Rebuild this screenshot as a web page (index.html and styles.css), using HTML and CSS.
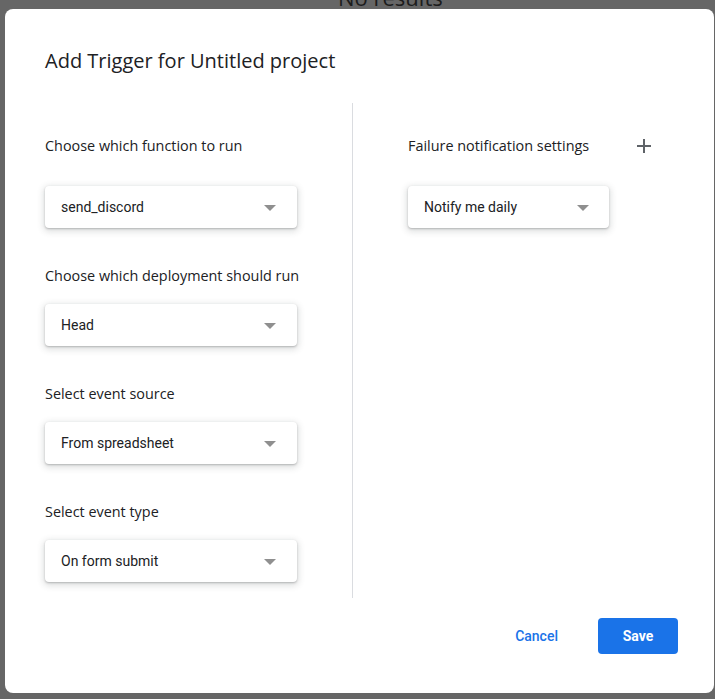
FILE: index.html
```html
<!DOCTYPE html>
<html lang="en">
<head>
<meta charset="utf-8">
<title>Add Trigger</title>
<link rel="stylesheet" href="styles.css">
</head>
<body>
<div class="behind"><span>No results</span></div>
<div class="dialog" role="dialog">
  <h1 class="title">Add Trigger for Untitled project</h1>
  <div class="columns">
    <div class="col col-left">
      <div class="label label-first">Choose which function to run</div>
      <div class="select"><span>send_discord</span><i class="arrow"></i></div>
      <div class="label">Choose which deployment should run</div>
      <div class="select"><span>Head</span><i class="arrow"></i></div>
      <div class="label">Select event source</div>
      <div class="select"><span>From spreadsheet</span><i class="arrow"></i></div>
      <div class="label">Select event type</div>
      <div class="select"><span>On form submit</span><i class="arrow"></i></div>
    </div>
    <div class="col col-right">
      <div class="label label-first label-row">
        <span>Failure notification settings</span>
        <button class="plus" aria-label="Add">
          <svg width="16" height="16" viewBox="0 0 16 16"><path d="M8 1v14M1 8h14" stroke="#5f6368" stroke-width="2" fill="none"/></svg>
        </button>
      </div>
      <div class="select select-short"><span>Notify me daily</span><i class="arrow"></i></div>
    </div>
  </div>
  <div class="footer">
    <button class="btn btn-text">Cancel</button>
    <button class="btn btn-primary">Save</button>
  </div>
</div>
</body>
</html>
```
FILE: styles.css
```css
html, body {
  margin: 0;
  padding: 0;
}
body {
  background: #666666;
  height: 699px;
  overflow: hidden;
  font-family: "Open Sans", "Roboto", sans-serif;
}
.behind {
  height: 9px;
  overflow: hidden;
  padding-left: 338px;
}
.behind span {
  display: block;
  font-size: 22px;
  line-height: 22px;
  margin-top: -14px;
  color: #1c1c1c;
}
.dialog {
  box-sizing: border-box;
  width: 709px;
  margin: 0 0 0 5px;
  background: #ffffff;
  border-radius: 8px;
  padding: 38px 36px 39px 40px;
}
.title {
  margin: 0 0 28px;
  font-size: 20px;
  font-weight: 400;
  line-height: 28px;
  color: #202124;
}
.columns {
  display: flex;
}
.col {
  display: flex;
  flex-direction: column;
  align-items: flex-start;
  padding-top: 23px;
  padding-bottom: 16px;
}
.col-left {
  box-sizing: border-box;
  width: 308px;
  border-right: 1px solid #dadce0;
}
.col-right {
  padding-left: 55px;
}
.label {
  font-size: 14.4px;
  line-height: 20px;
  height: 20px;
  color: #202124;
  margin: 38px 0 18px;
  display: flex;
  align-items: center;
}
.label.label-first {
  margin: 0 0 20px;
  height: 40px;
}
.label-row {
  width: 252px;
  justify-content: space-between;
}
.plus {
  width: 30px;
  height: 30px;
  padding: 0;
  margin-right: 1px;
  border: 0;
  background: transparent;
  display: flex;
  align-items: center;
  justify-content: center;
}
.select {
  box-sizing: border-box;
  width: 252px;
  height: 42px;
  border-radius: 4px;
  background: #fff;
  box-shadow: 0 1px 2px rgba(60, 64, 67, 0.3), 0 2px 6px 2px rgba(60, 64, 67, 0.15);
  display: flex;
  align-items: center;
  justify-content: space-between;
  padding: 0 21px 0 16px;
  font-family: "Roboto", sans-serif;
  font-size: 14px;
  color: #202124;
}
.select-short {
  width: 201px;
  padding-right: 20px;
}
.arrow {
  width: 0;
  height: 0;
  border-left: 6px solid transparent;
  border-right: 6px solid transparent;
  border-top: 6px solid #8f8f8f;
  margin-top: 2px;
}
.footer {
  display: flex;
  justify-content: flex-end;
  align-items: center;
  gap: 24px;
  margin-top: 20px;
}
.btn {
  height: 36px;
  border: 0;
  border-radius: 4px;
  font-family: "Roboto", sans-serif;
  font-size: 14px;
  font-weight: 500;
  cursor: pointer;
}
.btn-text {
  background: transparent;
  color: #1a73e8;
  padding: 0 16px;
}
.btn-primary {
  width: 80px;
  background: #1a73e8;
  color: #ffffff;
  font-weight: 700;
}
```
